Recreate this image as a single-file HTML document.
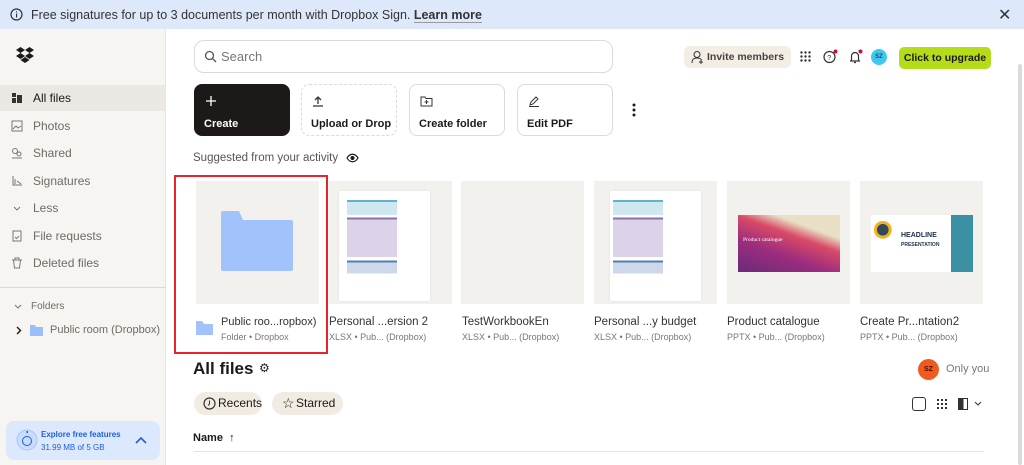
<!DOCTYPE html>
<html><head><meta charset="utf-8"><style>
*{margin:0;padding:0;box-sizing:border-box}
body{width:1024px;height:465px;overflow:hidden;font-family:"Liberation Sans",sans-serif;color:#1e1919;background:#fff;position:relative}
.a{position:absolute;white-space:nowrap}
.banner{left:0;top:0;width:1024px;height:29px;background:#dde9fb;font-size:12.5px;color:#333}
.side{left:0;top:29px;width:166px;height:436px;background:#f7f5f2;border-right:1px solid #e6e3df}
.nav{left:0;width:166px;height:26px;font-size:12px;color:#6f6a66;line-height:26px;padding-left:33px}
.nav svg{position:absolute;left:11px;top:7px}
.btn{border:1px solid #ddd9d4;border-radius:8px;height:52px;width:96px;font-size:11px;font-weight:bold}
.btn span{position:absolute;left:9px;top:33px}
.btn svg{position:absolute;left:10px;top:10px}
.card{top:181px;width:123px;height:123px;background:#f3f1ed}
.nm{top:316px;font-size:11.5px;color:#333}
.sb{top:332px;font-size:9px;color:#7a7571}
.paper{left:16px;top:10px;width:91px;height:110px;background:#fff;box-shadow:0 0 2px #ddd}
.chip{top:392px;height:23px;background:#f1ebe2;border-radius:12px;font-size:12px;line-height:23px}
</style></head><body>
<div class="a banner">
<svg class="a" style="left:10px;top:8px" width="13" height="13" viewBox="0 0 13 13"><circle cx="6.5" cy="6.5" r="5.5" fill="none" stroke="#333" stroke-width="1.2"/><rect x="6" y="5.5" width="1.1" height="4" fill="#333"/><rect x="6" y="3.3" width="1.1" height="1.1" fill="#333"/></svg>
<div class="a" style="left:31px;top:8px">Free signatures for up to 3 documents per month with Dropbox Sign. <b style="border-bottom:1px solid #999">Learn more</b></div>
<div class="a" style="left:998px;top:5px;font-size:16px">✕</div>
</div>
<div class="a side">
<svg class="a" style="left:16px;top:18px" width="18" height="16" viewBox="0 0 18 16"><path d="M4.5 0L0 3l4.5 3L9 3zM13.5 0L9 3l4.5 3L18 3zM0 9l4.5 3L9 9 4.5 6zM13.5 6L9 9l4.5 3L18 9zM4.5 13L9 16l4.5-3L9 10z" fill="#1e1919"/></svg>
<div class="a nav" style="top:56px;background:#ebe8e4;color:#1e1919"><svg width="12" height="12"><rect x="1" y="1" width="4" height="4" fill="#333"/><rect x="1" y="6" width="4" height="5" fill="#333"/><rect x="6" y="3" width="5" height="8" fill="#333"/></svg>All files</div>
<div class="a nav" style="top:84px"><svg width="12" height="12"><rect x="1" y="1" width="10" height="10" fill="none" stroke="#777"/><path d="M2 9l3-3 2 2 3-2" stroke="#777" fill="none"/></svg>Photos</div>
<div class="a nav" style="top:111px"><svg width="12" height="12"><circle cx="4" cy="4" r="2.5" fill="none" stroke="#777"/><circle cx="8" cy="7" r="2" fill="none" stroke="#777"/><path d="M1 11h10" stroke="#777"/></svg>Shared</div>
<div class="a nav" style="top:139px"><svg width="12" height="12"><path d="M2 1v9h9M4 4v5M6 6l4 3" stroke="#777" fill="none"/></svg>Signatures</div>
<div class="a nav" style="top:166px"><svg width="12" height="12"><path d="M3 5l3 3 3-3" stroke="#777" fill="none"/></svg>Less</div>
<div class="a nav" style="top:194px"><svg width="12" height="12"><rect x="2" y="1" width="8" height="10" fill="none" stroke="#777"/><path d="M4 7l1.5 1.5L8 6" stroke="#777" fill="none"/></svg>File requests</div>
<div class="a nav" style="top:221px"><svg width="12" height="12"><path d="M1 3h10M4 3V1h4v2M2.5 3l1 8h5l1-8" stroke="#777" fill="none"/></svg>Deleted files</div>
<div class="a" style="left:0;top:258px;width:166px;border-top:1px solid #dcd8d3"></div>
<svg class="a" style="left:14px;top:275px" width="8" height="6"><path d="M1 1l3 3 3-3" stroke="#777" fill="none"/></svg>
<div class="a" style="left:31px;top:272px;font-size:10px;color:#6f6a66">Folders</div>
<svg class="a" style="left:16px;top:297px" width="6" height="9"><path d="M1 1l3.5 3.5L1 8" stroke="#1e1919" stroke-width="1.4" fill="none"/></svg>
<svg class="a" style="left:30px;top:295px" width="13" height="12"><path d="M0 1h5l1 2h7v9H0z" fill="#9bbdf9"/></svg>
<div class="a" style="left:50px;top:295px;font-size:11px;color:#6f6a66">Public room (Dropbox)</div>
<div class="a" style="left:6px;top:392px;width:154px;height:39px;background:#dce9fd;border-radius:8px">
<svg class="a" style="left:10px;top:8px" width="22" height="22"><circle cx="11" cy="11" r="10" fill="#c9dcfb" stroke="#a8c5f5"/><circle cx="11" cy="12" r="4.5" fill="none" stroke="#1f5fd6"/><rect x="10.5" y="2" width="1.5" height="2" fill="#1f5fd6"/></svg>
<div class="a" style="left:35px;top:9px;font-size:8px;color:#1f5fd6;font-weight:bold">Explore free features</div>
<div class="a" style="left:35px;top:22px;font-size:8px;color:#1f5fd6">31.99 MB of 5 GB</div>
<svg class="a" style="left:129px;top:15px" width="12" height="8"><path d="M1 7l5-5 5 5" stroke="#1f5fd6" stroke-width="1.6" fill="none"/></svg>
</div>
</div>
<div class="a" style="left:1018px;top:64px;width:4px;height:401px;background:#dadada;border-radius:2px"></div>
<div class="a" style="left:194px;top:40px;width:419px;height:33px;border:1px solid #ddd9d4;border-radius:10px"></div>
<svg class="a" style="left:204px;top:50px" width="13" height="13"><circle cx="5.5" cy="5.5" r="4" fill="none" stroke="#555" stroke-width="1.3"/><path d="M8.5 8.5L12 12" stroke="#555" stroke-width="1.3"/></svg>
<div class="a" style="left:221px;top:49px;font-size:13px;color:#777">Search</div>
<div class="a" style="left:684px;top:46px;width:107px;height:22px;background:#f3ede4;border-radius:6px;font-size:10.5px;font-weight:bold;line-height:22px;padding-left:23px;color:#444">Invite members</div>
<svg class="a" style="left:691px;top:50px" width="14" height="14"><circle cx="6" cy="4.5" r="3" fill="none" stroke="#333"/><path d="M1 13c0-4 2-5 5-5s4 1 4.5 2M10 10v4M8 12h4" stroke="#333" fill="none"/></svg>
<svg class="a" style="left:800px;top:51px" width="11" height="11"><g fill="#333"><circle cx="1.5" cy="1.5" r="1.2"/><circle cx="5.5" cy="1.5" r="1.2"/><circle cx="9.5" cy="1.5" r="1.2"/><circle cx="1.5" cy="5.5" r="1.2"/><circle cx="5.5" cy="5.5" r="1.2"/><circle cx="9.5" cy="5.5" r="1.2"/><circle cx="1.5" cy="9.5" r="1.2"/><circle cx="5.5" cy="9.5" r="1.2"/><circle cx="9.5" cy="9.5" r="1.2"/></g></svg>
<svg class="a" style="left:823px;top:49px" width="16" height="15"><circle cx="6.5" cy="8" r="5.5" fill="none" stroke="#333" stroke-width="1.2"/><text x="4.3" y="11" font-size="7" font-family="Liberation Sans" fill="#333">?</text><circle cx="12.5" cy="2.5" r="2" fill="#c8102e"/></svg>
<svg class="a" style="left:848px;top:49px" width="15" height="15"><path d="M2 12h10M3.5 12V7a3.5 3.5 0 017 0v5M6 13.5h2" stroke="#333" stroke-width="1.2" fill="none"/><circle cx="12.5" cy="2.5" r="2" fill="#c8102e"/></svg>
<div class="a" style="left:871px;top:49px;width:16px;height:16px;border-radius:50%;background:#3dc8ef;font-size:6px;font-weight:bold;line-height:16px;text-align:center;color:#1a4d66">SZ</div>
<div class="a" style="left:899px;top:47px;width:92px;height:22px;background:#b4dc19;border-radius:5px;font-size:10.5px;font-weight:bold;line-height:22px;text-align:center;color:#1e1919">Click to upgrade</div>
<div class="a btn" style="left:194px;top:84px;background:#1e1919;color:#fff;border-color:#1e1919"><span>Create</span><svg width="12" height="12"><path d="M6 1v10M1 6h10" stroke="#fff" stroke-width="1.3"/></svg></div>
<div class="a btn" style="left:301px;top:84px;border-style:dashed"><span>Upload or Drop</span><svg width="12" height="12"><path d="M6 9V2M3 5l3-3 3 3M1 11h10" stroke="#333" stroke-width="1.3" fill="none"/></svg></div>
<div class="a btn" style="left:409px;top:84px"><span>Create folder</span><svg width="13" height="12"><path d="M1 2h4l1 1.5h6V11H1z" fill="none" stroke="#333"/><path d="M6.5 5v4M4.5 7h4" stroke="#333"/></svg></div>
<div class="a btn" style="left:517px;top:84px"><span>Edit PDF</span><svg width="12" height="12"><path d="M2 10l1-3 5-5 2 2-5 5zM1 11.5h10" stroke="#333" fill="none"/></svg></div>
<svg class="a" style="left:632px;top:103px" width="4" height="14"><g fill="#1e1919"><circle cx="2" cy="2" r="1.5"/><circle cx="2" cy="7" r="1.5"/><circle cx="2" cy="12" r="1.5"/></g></svg>
<div class="a" style="left:193px;top:152px;font-size:11.5px;color:#555">Suggested from your activity</div>
<svg class="a" style="left:346px;top:153px" width="13" height="10"><path d="M1 5c3-5 8-5 11 0-3 5-8 5-11 0z" fill="none" stroke="#1e1919" stroke-width="1.2"/><circle cx="6.5" cy="5" r="2" fill="#1e1919"/></svg>

<div class="a card" style="left:196px"><svg class="a" style="left:25px;top:30px" width="72" height="60"><path d="M0 2a2 2 0 012-2h16l4 9h48a2 2 0 012 2v47a2 2 0 01-2 2H2a2 2 0 01-2-2z" fill="#a1c2fb"/></svg></div>
<div class="a card" style="left:329px"><div class="a paper" style="left:10px;background:linear-gradient(#fff 0 8%,#5fb4cc 8% 10%,#cfe7ee 10% 22%,#fff 22% 24%,#8a70aa 24% 26%,#ddd3e8 26% 60%,#fff 60% 63%,#4d7fb5 63% 65%,#cdd9ea 65% 75%,#fff 75%);background-size:55% 100%;background-repeat:no-repeat;background-color:#fff;background-position:8px 0"></div></div>
<div class="a card" style="left:461px"></div>
<div class="a card" style="left:594px"><div class="a paper" style="left:16px;background:linear-gradient(#fff 0 8%,#5fb4cc 8% 10%,#cfe7ee 10% 22%,#fff 22% 24%,#8a70aa 24% 26%,#ddd3e8 26% 60%,#fff 60% 63%,#4d7fb5 63% 65%,#cdd9ea 65% 75%,#fff 75%);background-size:55% 100%;background-repeat:no-repeat;background-color:#fff;background-position:3px 0"></div></div>
<div class="a card" style="left:727px"><div class="a" style="left:11px;top:34px;width:102px;height:57px;background:linear-gradient(200deg,#e8dfc5 0 25%,#d94a66 40%,#9c2d7f 65%,#6b2a7a 100%)"><div class="a" style="left:5px;top:22px;font-size:5.5px;color:#fff;font-family:'Liberation Serif',serif">Product catalogue</div></div></div>
<div class="a card" style="left:860px"><div class="a" style="left:11px;top:34px;width:102px;height:57px;background:#fff"><div class="a" style="left:80px;top:0;width:22px;height:57px;background:#3a8fa3"></div><div class="a" style="left:3px;top:6px;width:22px;height:22px;background:radial-gradient(circle at 40% 40%,#2f4a5f 30%,#f3b21a 32% 45%,transparent 50%)"></div><div class="a" style="left:30px;top:17px;font-size:7px;font-weight:bold;color:#1b2d4f">HEADLINE</div><div class="a" style="left:30px;top:27px;font-size:5px;font-weight:bold;color:#1b2d4f">PRESENTATION</div></div></div>

<div class="a" style="left:174px;top:175px;width:154px;height:179px;border:2px solid #e8242a"></div>
<svg class="a" style="left:196px;top:321px" width="17" height="14"><path d="M0 1a1 1 0 011-1h5l2 3h9v11H0z" fill="#a1c2fb"/></svg>
<div class="a nm" style="left:221px;font-size:11px">Public roo...ropbox)</div><div class="a sb" style="left:221px">Folder • Dropbox</div>
<div class="a nm" style="left:329px">Personal ...ersion 2</div><div class="a sb" style="left:329px">XLSX • Pub... (Dropbox)</div>
<div class="a nm" style="left:462px">TestWorkbookEn</div><div class="a sb" style="left:462px">XLSX • Pub... (Dropbox)</div>
<div class="a nm" style="left:594px">Personal ...y budget</div><div class="a sb" style="left:594px">XLSX • Pub... (Dropbox)</div>
<div class="a nm" style="left:727px">Product catalogue</div><div class="a sb" style="left:727px">PPTX • Pub... (Dropbox)</div>
<div class="a nm" style="left:860px">Create Pr...ntation2</div><div class="a sb" style="left:860px">PPTX • Pub... (Dropbox)</div>

<div class="a" style="left:193px;top:359px;font-size:17px;font-weight:bold">All files</div>
<div class="a" style="left:259px;top:361px;font-size:12px">⚙</div>
<div class="a" style="left:918px;top:359px;width:21px;height:21px;border-radius:50%;background:#f25a1d;font-size:7px;font-weight:bold;line-height:21px;text-align:center;color:#3a1000">SZ</div>
<div class="a" style="left:946px;top:363px;font-size:11px;color:#777">Only you</div>
<div class="a chip" style="left:194px;width:68px;padding-left:24px">Recents</div>
<svg class="a" style="left:203px;top:397px" width="13" height="13"><circle cx="6.5" cy="6.5" r="5.5" fill="none" stroke="#333" stroke-width="1.2"/><path d="M6.5 3.5v3.5L5 8.5" stroke="#333" fill="none"/></svg>
<div class="a chip" style="left:272px;width:71px;padding-left:24px">Starred</div>
<div class="a" style="left:282px;top:395px;font-size:14px">☆</div>
<div class="a" style="left:912px;top:397px;width:14px;height:14px;border:1.3px solid #333;border-radius:3px"></div>
<svg class="a" style="left:937px;top:399px" width="10" height="10"><g fill="#333"><rect x="0" y="0" width="2" height="2"/><rect x="4" y="0" width="2" height="2"/><rect x="8" y="0" width="2" height="2"/><rect x="0" y="4" width="2" height="2"/><rect x="4" y="4" width="2" height="2"/><rect x="8" y="4" width="2" height="2"/><rect x="0" y="8" width="2" height="2"/><rect x="4" y="8" width="2" height="2"/><rect x="8" y="8" width="2" height="2"/></g></svg>
<svg class="a" style="left:958px;top:398px" width="26" height="12"><rect x="0.5" y="0.5" width="9" height="11" fill="none" stroke="#333"/><rect x="0.5" y="0.5" width="5" height="11" fill="#333"/><path d="M17 4l3 3 3-3" stroke="#333" fill="none"/></svg>
<div class="a" style="left:193px;top:432px;font-size:11px;font-weight:bold">Name&nbsp;&nbsp;↑</div>
<div class="a" style="left:194px;top:451px;width:790px;border-top:1px solid #e8e5e1"></div>
</body></html>
